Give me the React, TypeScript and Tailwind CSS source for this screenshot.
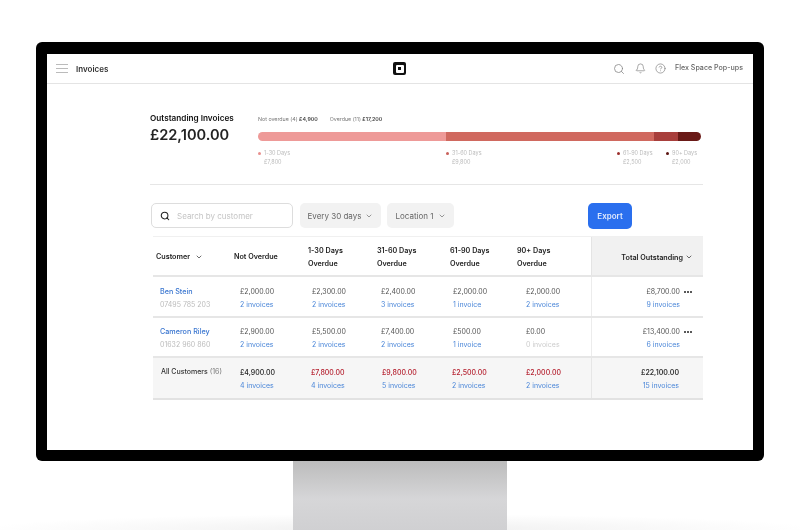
import { Bell, ChevronDown, CircleHelp, Search } from 'lucide-react'

const legend = [
  { label: '1-30 Days', amount: '£7,800', dot: 'bg-[#e88f8d]', width: 'w-[188px]' },
  { label: '31-60 Days', amount: '£9,800', dot: 'bg-[#c9605a]', width: 'w-[171px]' },
  { label: '61-90 Days', amount: '£2,500', dot: 'bg-[#9c2f2c]', width: 'w-[49px]' },
  { label: '90+ Days', amount: '£2,000', dot: 'bg-[#5c1512]', width: 'w-[35px]' },
]

const columns = 'grid grid-cols-[81px_74px_69px_72px_68px_74px_112px]'

const rows = [
  {
    name: 'Ben Stein',
    phone: '07495 785 203',
    total: '£8,700.00',
    totalInvoices: '9 invoices',
    height: 'h-[41px]',
    cells: [
      { value: '£2,000.00', invoices: '2 invoices', pad: 'pl-[6px]' },
      { value: '£2,300.00', invoices: '2 invoices', pad: 'pl-[4px]' },
      { value: '£2,400.00', invoices: '3 invoices', pad: 'pl-[4px]' },
      { value: '£2,000.00', invoices: '1 invoice', pad: 'pl-[4px]' },
      { value: '£2,000.00', invoices: '2 invoices', pad: 'pl-[9px]' },
    ],
  },
  {
    name: 'Cameron Riley',
    phone: '01632 960 860',
    total: '£13,400.00',
    totalInvoices: '6 invoices',
    height: 'h-[40px]',
    cells: [
      { value: '£2,900.00', invoices: '2 invoices', pad: 'pl-[6px]' },
      { value: '£5,500.00', invoices: '2 invoices', pad: 'pl-[4px]' },
      { value: '£7,400.00', invoices: '2 invoices', pad: 'pl-[4px]' },
      { value: '£500.00', invoices: '1 invoice', pad: 'pl-[4px]' },
      { value: '£0.00', invoices: '0 invoices', pad: 'pl-[9px]', empty: true },
    ],
  },
]

const totals = [
  { value: '£4,900.00', invoices: '4 invoices', pad: 'pl-[6px]', color: 'text-[#222]' },
  { value: '£7,800.00', invoices: '4 invoices', pad: 'pl-[3px]', color: 'text-[#b5202f]' },
  { value: '£9,800.00', invoices: '5 invoices', pad: 'pl-[5px]', color: 'text-[#b5202f]' },
  { value: '£2,500.00', invoices: '2 invoices', pad: 'pl-[3px]', color: 'text-[#b5202f]' },
  { value: '£2,000.00', invoices: '2 invoices', pad: 'pl-[9px]', color: 'text-[#b5202f]' },
]

function Dots() {
  return (
    <span className="flex w-[9px] gap-[1px]">
      <span className="size-[2px] rounded-full bg-[#222]" />
      <span className="size-[2px] rounded-full bg-[#222]" />
      <span className="size-[2px] rounded-full bg-[#222]" />
    </span>
  )
}

export default function App() {
  return (
    <div className="flex h-[530px] w-[800px] flex-col items-center overflow-hidden bg-[radial-gradient(ellipse_420px_16px_at_50%_100%,#efefef,#ffffff)] pt-[42px] font-['Inter',sans-serif]">
      <div className="h-[419px] w-[728px] shrink-0 rounded-[6px] bg-black pt-[12px] pr-[11px] pb-[11px] pl-[11px]">
        <div className="h-[396px] w-[706px] bg-white blur-[0.4px]">
          <header className="flex h-[30px] items-center border-b border-[#e4e4e4] pr-[9px] pl-[9px]">
            <div className="flex w-[12px] flex-col gap-[3px]">
              <span className="h-px bg-[#bbb]" />
              <span className="h-px bg-[#bbb]" />
              <span className="h-px bg-[#bbb]" />
            </div>
            <span className="ml-[8px] w-[317px] text-[8px] font-semibold text-[#333]">Invoices</span>
            <div className="flex size-[13px] items-center justify-center rounded-[2px] bg-[#111]">
              <div className="flex size-[8px] items-center justify-center rounded-[1px] bg-white">
                <div className="size-[3px] bg-[#111]" />
              </div>
            </div>
            <Search size={12} strokeWidth={1.6} className="ml-[207px] text-[#888]" />
            <Bell size={11} strokeWidth={1.6} className="ml-[10px] text-[#888]" />
            <CircleHelp size={11} strokeWidth={1.6} className="ml-[9px] text-[#888]" />
            <span className="ml-[9px] text-[7.1px] font-medium whitespace-nowrap text-[#666]">Flex Space Pop-ups</span>
          </header>

          <div className="pt-[27px] pl-[103px]">
            <div className="flex h-[74px] w-[553px] border-b border-[#e6e6e6]">
              <div className="w-[108px] pt-[1px]">
                <div className="text-[8.2px] leading-[12px] font-semibold text-[#111]">Outstanding Invoices</div>
                <div className="text-[14.6px] leading-[22px] font-semibold text-[#222]">£22,100.00</div>
              </div>
              <div className="w-[443px]">
                <div className="flex gap-[12px] pt-[4px] text-[5.3px] leading-[8px] text-[#777]">
                  <span>
                    Not overdue (4) <span className="font-semibold text-[#444]">£4,900</span>
                  </span>
                  <span>
                    Overdue (11) <span className="font-semibold text-[#444]">£17,200</span>
                  </span>
                </div>
                <div className="mt-[9px] flex h-[9px] overflow-hidden rounded-full">
                  <div className="w-[188px] bg-[#ee9a98]" />
                  <div className="w-[208px] bg-[#d0695f]" />
                  <div className="w-[24px] bg-[#a83f3c]" />
                  <div className="w-[23px] bg-[#6a1a17]" />
                </div>
                <div className="mt-[8px] flex text-[5.5px] leading-[9px] text-[#bbb]">
                  {legend.map(item => (
                    <div key={item.label} className={`${item.width} flex shrink-0 gap-[3px]`}>
                      <span className={`${item.dot} mt-[3px] size-[3px] rounded-full`} />
                      <div className="whitespace-nowrap">
                        <div>{item.label}</div>
                        <div>{item.amount}</div>
                      </div>
                    </div>
                  ))}
                </div>
              </div>
            </div>

            <div className="mt-[18px] flex h-[26px] text-[8px]">
              <div className="ml-[1px] flex h-[25px] w-[142px] items-center rounded-[5px] border border-[#ddd] pl-[8px]">
                <Search size={10} strokeWidth={2.5} className="text-[#222]" />
                <span className="ml-[7px] text-[#c4c4c4]">Search by customer</span>
              </div>
              <div className="ml-[7px] flex h-[25px] w-[81px] items-center justify-center gap-[4px] rounded-[5px] bg-[#f2f2f2] text-[#666]">
                Every 30 days <ChevronDown size={8} />
              </div>
              <div className="ml-[6px] flex h-[25px] w-[67px] items-center justify-center gap-[4px] rounded-[5px] bg-[#f2f2f2] text-[#666]">
                Location 1 <ChevronDown size={8} />
              </div>
              <div className="ml-[134px] flex h-[26px] w-[44px] items-center justify-center rounded-[5px] bg-[#2a6fee] font-semibold text-[#dfe9fd]">
                Export
              </div>
            </div>

            <div className="mt-[7px] ml-[3px] w-[550px] text-[7px]">
              <div className={`${columns} h-[41px] items-stretch border-t border-b-2 border-t-[#f0f0f0] border-b-[#e6e6e6] text-[7.2px] leading-[13px] font-semibold text-[#222]`}>
                <div className="flex items-center gap-[5px] pl-[3px]">
                  Customer <ChevronDown size={8} className="mt-[2px]" />
                </div>
                <div className="flex items-center">Not Overdue</div>
                <div className="self-center pt-[2px]">
                  1-30 Days
                  <br />
                  Overdue
                </div>
                <div className="self-center pt-[2px]">
                  31-60 Days
                  <br />
                  Overdue
                </div>
                <div className="self-center pt-[2px] pl-[1px]">
                  61-90 Days
                  <br />
                  Overdue
                </div>
                <div className="self-center pt-[2px]">
                  90+ Days
                  <br />
                  Overdue
                </div>
                <div className="flex items-center justify-end gap-[2px] border-l border-[#e4e4e4] bg-[#f1f1f1] pt-[2px] pr-[10px]">
                  Total Outstanding <ChevronDown size={8} />
                </div>
              </div>

              {rows.map(row => (
                <div key={row.name} className={`${columns} ${row.height} border-b-2 border-[#e6e6e6] leading-[12.7px]`}>
                  <div className="self-center pt-[4px] pl-[7px]">
                    <div className="text-[7.2px] font-medium text-[#3a76d0]">{row.name}</div>
                    <div className="text-[#bbb]">{row.phone}</div>
                  </div>
                  {row.cells.map(cell => (
                    <div key={cell.value + cell.pad} className={`${cell.pad} self-center pt-[4px]`}>
                      <div className="text-[#555]">{cell.value}</div>
                      <div className={cell.empty ? 'text-[#ccc]' : 'text-[#4a86d8]'}>{cell.invoices}</div>
                    </div>
                  ))}
                  <div className="flex flex-col justify-center border-l border-[#ececec] pt-[4px] pr-[23px] text-right">
                    <div className="relative text-[#555]">
                      {row.total}
                      <span className="absolute top-[5px] right-[-13px]">
                        <Dots />
                      </span>
                    </div>
                    <div className="text-[#4a86d8]">{row.totalInvoices}</div>
                  </div>
                </div>
              ))}

              <div className={`${columns} h-[42px] border-b-2 border-[#e2e2e2] bg-[#f6f6f6] leading-[12.7px]`}>
                <div className="pt-[8px] pl-[8px] font-medium text-[#333]">
                  All Customers <span className="font-normal text-[#777]">(16)</span>
                </div>
                {totals.map(cell => (
                  <div key={cell.value} className={`${cell.pad} self-center pt-[4px]`}>
                    <div className={`${cell.color} font-medium`}>{cell.value}</div>
                    <div className="text-[#4a86d8]">{cell.invoices}</div>
                  </div>
                ))}
                <div className="flex flex-col justify-center border-l border-[#e6e6e6] pt-[4px] pr-[24px] text-right">
                  <div className="font-semibold text-[#333]">£22,100.00</div>
                  <div className="text-[#4a86d8]">15 invoices</div>
                </div>
              </div>
            </div>
          </div>
        </div>
      </div>
      <div className="h-[69px] w-[214px] shrink-0 bg-[linear-gradient(to_bottom,#bcbcbc,#d6d6d8_55%,#d0d0d2)]" />
    </div>
  )
}
